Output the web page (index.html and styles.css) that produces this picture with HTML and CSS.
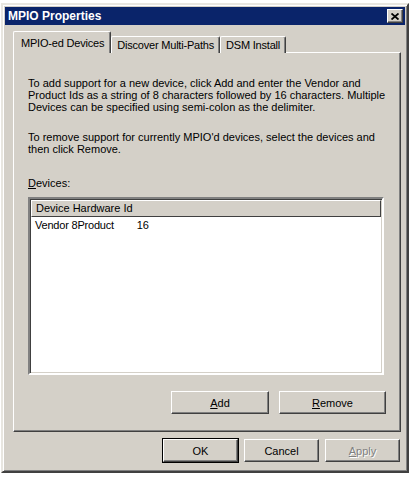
FILE: index.html
```html
<!DOCTYPE html>
<html lang="en">
<head>
    <meta charset="UTF-8">
    <title>MPIO Properties</title>
    <link rel="stylesheet" href="styles.css">
</head>
<body>

    <div class="window">
        <div class="titlebar">
            <span class="title">MPIO Properties</span>
            <div class="close-btn">
                <svg width="8" height="7" viewBox="0 0 8 7">
                    <path d="M0.5 0.5 L7.5 6.5 M7.5 0.5 L0.5 6.5" stroke="#000" stroke-width="1.8" fill="none"/>
                </svg>
            </div>
        </div>

        <div class="tabs">
            <div class="tab active">MPIO-ed Devices</div>
            <div class="tab">Discover Multi-Paths</div>
            <div class="tab">DSM Install</div>
        </div>

        <div class="panel">
            <p class="info">To add support for a new device, click Add and enter the Vendor and<br>Product Ids as a string of 8 characters followed by 16 characters. Multiple<br>Devices can be specified using semi-colon as the delimiter.</p>
            <p class="info second">To remove support for currently MPIO'd devices, select the devices and<br>then click Remove.</p>

            <div class="label"><u>D</u>evices:</div>

            <div class="listbox">
                <div class="list-header">Device Hardware Id</div>
                <div class="list-row">Vendor 8Product        16</div>
            </div>

            <div class="panel-buttons">
                <div class="btn btn-add"><u>A</u>dd</div>
                <div class="btn btn-remove"><u>R</u>emove</div>
            </div>
        </div>

        <div class="dialog-buttons">
            <div class="btn btn-default">OK</div>
            <div class="btn">Cancel</div>
            <div class="btn disabled"><u>A</u>pply</div>
        </div>
    </div>

</body>
</html>
```

FILE: styles.css
```css
* {
    margin: 0;
    padding: 0;
    box-sizing: border-box;
}

body {
    background-color: #fff;
    font-family: 'Liberation Sans', Arial, sans-serif;
    font-size: 11px;
    color: #000;
}

.window {
    margin: 3px 0 0 1px;
    width: 408px;
    height: 470px;
    background-color: #d4d0c8;
    border: 2px solid;
    border-color: #e8e6e0 #404040 #404040 #e8e6e0;
    box-shadow: inset 1px 1px 0 #fff, inset -1px -1px 0 #808080;
    padding: 2px;
}

.titlebar {
    height: 18px;
    background-color: #0a246a;
    display: flex;
    align-items: center;
    justify-content: space-between;
    padding: 0 2px 0 3px;
}

.title {
    color: #fff;
    font-weight: bold;
    font-size: 12px;
}

.close-btn {
    width: 16px;
    height: 14px;
    background-color: #d4d0c8;
    border: 1px solid;
    border-color: #fff #404040 #404040 #fff;
    box-shadow: inset -1px -1px 0 #808080;
    display: flex;
    align-items: center;
    justify-content: center;
}

/* tabs */
.tabs {
    display: flex;
    align-items: flex-end;
    height: 28px;
    padding-left: 8px;
    margin-bottom: -1px;
    position: relative;
    z-index: 1;
}

.tab {
    height: 17px;
    padding: 0 5px 0 5px;
    line-height: 16px;
    border: 1px solid;
    border-bottom: none;
    border-color: #fff #404040 #404040 #fff;
    box-shadow: inset -1px 0 0 #808080;
    border-radius: 2px 2px 0 0;
    background-color: #d4d0c8;
    white-space: nowrap;
    letter-spacing: -0.2px;
}

.tab.active {
    height: 22px;
    padding: 0 6px 0 7px;
    line-height: 22px;
}

.panel {
    margin-left: 8px;
    width: 388px;
    height: 380px;
    border: 1px solid;
    border-color: #fff #404040 #404040 #fff;
    box-shadow: inset -1px -1px 0 #808080;
    padding: 24px 15px 0 14px;
}

.info {
    line-height: 12px;
    white-space: nowrap;
}

.info.second {
    margin-top: 18px;
}

.label {
    margin-top: 22px;
    line-height: 12px;
}

.listbox {
    margin-top: 8px;
    height: 178px;
    width: 356px;
    background-color: #fff;
    border: 2px solid;
    border-color: #808080 #fff #fff #808080;
    box-shadow: inset 1px 1px 0 #404040, inset -1px -1px 0 #d4d0c8;
    padding: 1px;
}

.list-header {
    height: 17px;
    line-height: 15px;
    background-color: #d4d0c8;
    border: 1px solid;
    border-color: #fff #404040 #404040 #fff;
    padding-left: 4px;
}

.list-row {
    line-height: 17px;
    padding-left: 4px;
    white-space: pre;
    letter-spacing: -0.2px;
}

.panel-buttons {
    display: flex;
    justify-content: flex-end;
    gap: 10px;
    margin-top: 16px;
}

/* buttons */
.btn {
    width: 75px;
    height: 23px;
    background-color: #d4d0c8;
    border: 1px solid;
    border-color: #fff #404040 #404040 #fff;
    box-shadow: inset -1px -1px 0 #808080;
    display: flex;
    align-items: center;
    justify-content: center;
}

.btn-add {
    width: 98px;
}

.btn-remove {
    width: 107px;
    margin-right: -1px;
}

.btn-default {
    outline: 1px solid #000;
    outline-offset: 0;
}

.btn.disabled {
    color: #808080;
    text-shadow: 1px 1px 0 #fff;
}

.dialog-buttons {
    display: flex;
    justify-content: flex-end;
    gap: 6px;
    margin-top: 7px;
    padding-right: 5px;
}
```
